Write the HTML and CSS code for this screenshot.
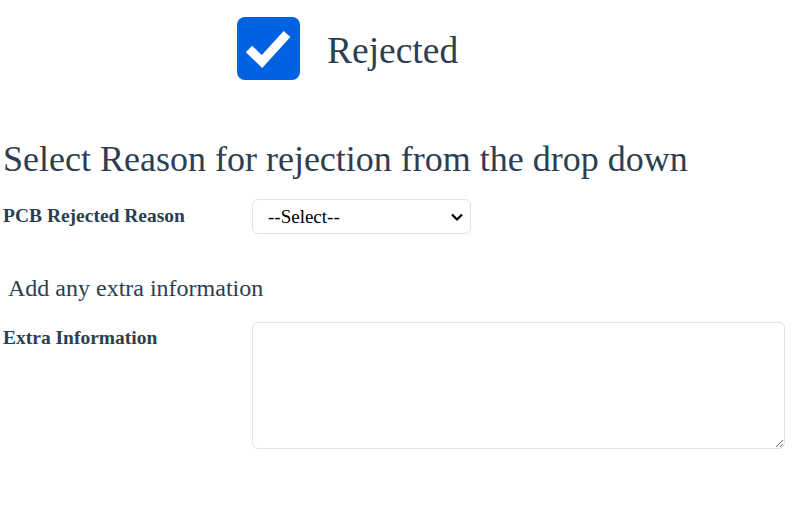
FILE: index.html
```html
<!DOCTYPE html>
<html>
<head>
<meta charset="utf-8">
<link rel="stylesheet" href="styles.css">
</head>
<body>
<div class="app">
  <div class="status">
    <span class="checkbox">
      <svg width="63" height="63" viewBox="0 0 63 63">
        <rect x="0" y="0" width="63" height="63" rx="8" ry="8" fill="#0062e0"/>
        <polyline points="12,32 25,44.5 50,17" fill="none" stroke="#ffffff" stroke-width="9" stroke-linejoin="miter"/>
      </svg>
    </span>
    <span class="status-text">Rejected</span>
  </div>
  <h2 class="title">Select Reason for rejection from the drop down</h2>
  <div class="row row-select">
    <label class="label">PCB Rejected Reason</label>
    <div class="select-wrap">
      <select class="select">
        <option>--Select--</option>
      </select>
      <svg class="chevron" width="14" height="10" viewBox="0 0 14 10">
        <polyline points="2,2.5 7,7.5 12,2.5" fill="none" stroke="#000" stroke-width="2.2"/>
      </svg>
    </div>
  </div>
  <h3 class="subtitle">Add any extra information</h3>
  <div class="row row-text">
    <label class="label">Extra Information</label>
    <textarea class="textarea"></textarea>
  </div>
</div>
</body>
</html>
```

FILE: styles.css
```css
html, body {
  margin: 0;
  padding: 0;
  background: #ffffff;
}

.app {
  font-family: "Liberation Serif", "Times New Roman", serif;
  color: #2c3e50;
  padding-left: 3px;
}

.status {
  display: flex;
  align-items: flex-start;
  margin-top: 17px;
  padding-left: 234px;
  height: 63px;
}

.checkbox {
  display: block;
  width: 63px;
  height: 63px;
}

.checkbox svg {
  display: block;
}

.status-text {
  font-size: 37.5px;
  line-height: 37px;
  margin-top: 15px;
  margin-left: 27px;
}

.title {
  font-size: 36px;
  line-height: 36px;
  font-weight: normal;
  margin: 61px 0 0 0;
}

.row {
  display: flex;
  align-items: flex-start;
}

.row-select {
  margin-top: 22px;
}

.label {
  width: 249px;
  font-weight: bold;
  font-size: 19.5px;
  line-height: 19px;
  padding-top: 7px;
}

.row-text .label {
  padding-top: 6px;
}

.select-wrap {
  position: relative;
  width: 219px;
  height: 35px;
}

.select {
  appearance: none;
  -webkit-appearance: none;
  width: 219px;
  height: 35px;
  box-sizing: border-box;
  border: 1px solid #dee2e6;
  border-radius: 6px;
  background: #ffffff;
  font-family: "Liberation Serif", "Times New Roman", serif;
  font-size: 19px;
  color: #000000;
  padding: 0 30px 0 15px;
  margin: 0;
  outline: none;
}

.chevron {
  position: absolute;
  right: 7px;
  top: 13px;
  pointer-events: none;
}

.subtitle {
  font-size: 24px;
  line-height: 24px;
  font-weight: normal;
  margin: 42px 0 0 0;
  padding-left: 5px;
}

.row-text {
  margin-top: 22px;
}

.textarea {
  width: 533px;
  height: 127px;
  box-sizing: border-box;
  border: 1px solid #dee2e6;
  border-radius: 6px;
  margin: 0;
  padding: 6px 12px;
  font-family: "Liberation Serif", "Times New Roman", serif;
  font-size: 16px;
  outline: none;
  resize: both;
}
```
